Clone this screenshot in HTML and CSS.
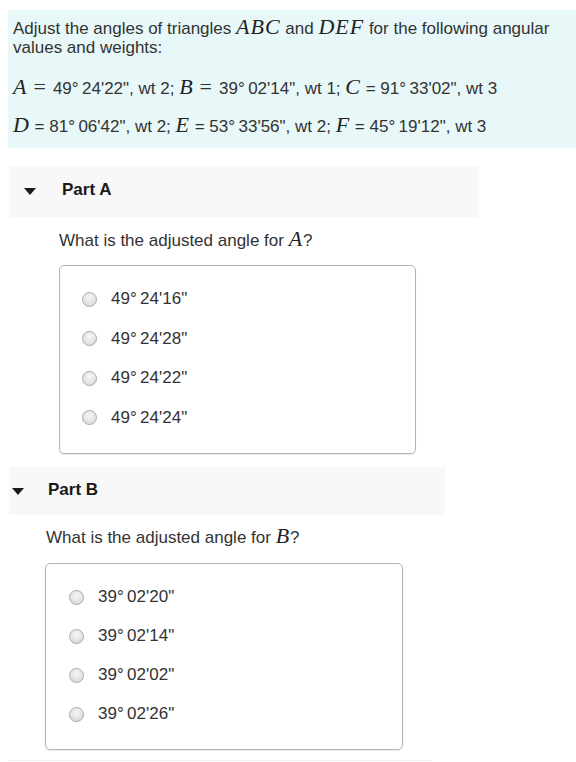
FILE: index.html
```html
<!DOCTYPE html>
<html lang="en">
<head>
    <meta charset="UTF-8">
    <meta name="viewport" content="width=device-width, initial-scale=1.0">
    <title>Angle Adjustment</title>
    <link rel="stylesheet" href="styles.css">
</head>
<body>
    <div class="prompt">
        <p>Adjust the angles of triangles <i class="m">ABC</i> and <i class="m">DEF</i> for the following angular values and weights:</p>
        <p class="vals"><i class="m">A</i><span class="meq">=</span>49°&thinsp;24'22", wt 2; <i class="m">B</i><span class="meq">=</span>39°&thinsp;02'14", wt 1; <i class="m">C</i> = 91°&thinsp;33'02", wt 3</p>
        <p class="vals"><i class="m">D</i> = 81°&thinsp;06'42", wt 2; <i class="m">E</i> = 53°&thinsp;33'56", wt 2; <i class="m">F</i> = 45°&thinsp;19'12", wt 3</p>
    </div>

    <div class="part part-a">
        <div class="part-head">
            <span class="caret"></span>
            <span class="part-title">Part A</span>
        </div>
        <div class="question">What is the adjusted angle for <i class="m">A</i>?</div>
        <div class="choices">
            <label class="choice"><input type="radio" name="a">49°&thinsp;24'16"</label>
            <label class="choice"><input type="radio" name="a">49°&thinsp;24'28"</label>
            <label class="choice"><input type="radio" name="a">49°&thinsp;24'22"</label>
            <label class="choice"><input type="radio" name="a">49°&thinsp;24'24"</label>
        </div>
    </div>

    <div class="part part-b">
        <div class="part-head">
            <span class="caret"></span>
            <span class="part-title">Part B</span>
        </div>
        <div class="question">What is the adjusted angle for <i class="m">B</i>?</div>
        <div class="choices">
            <label class="choice"><input type="radio" name="b">39°&thinsp;02'20"</label>
            <label class="choice"><input type="radio" name="b">39°&thinsp;02'14"</label>
            <label class="choice"><input type="radio" name="b">39°&thinsp;02'02"</label>
            <label class="choice"><input type="radio" name="b">39°&thinsp;02'26"</label>
        </div>
        <div class="rule"></div>
    </div>
</body>
</html>
```

FILE: styles.css
```css
* {
    margin: 0;
    padding: 0;
    box-sizing: border-box;
}

body {
    font-family: "Liberation Sans", Arial, sans-serif;
    font-size: 17px;
    line-height: 20px;
    color: #333;
    background: #fff;
}

/* math letters, set like MathJax italics */
.m {
    font-family: "Liberation Serif", "Times New Roman", serif;
    font-style: italic;
    font-size: 22px;
    line-height: 0;
    letter-spacing: 1px;
    color: #222;
}

.meq {
    font-family: "Liberation Serif", serif;
    font-size: 22px;
    line-height: 0;
    margin: 0 7px 0 6px;
}

/* problem statement */
.prompt {
    margin: 10px 0 0 8px;
    background: #e8f7f8;
    padding: 9px 12px 12px 5px;
    line-height: 19px;
    height: 138px;
}

.prompt .vals {
    margin-top: 22px;
}

.prompt .vals + .vals {
    margin-top: 19px;
}

/* parts */
.part-head {
    display: flex;
    align-items: center;
    background: #f8f8f8;
    margin-left: 9px;
}

.caret {
    width: 0;
    height: 0;
    border-left: 6px solid transparent;
    border-right: 6px solid transparent;
    border-top: 7px solid #1a1a1a;
}

.part-title {
    font-weight: bold;
    color: #1a1a1a;
    padding-bottom: 3px;
}

.choices {
    display: flex;
    flex-direction: column;
    border: 1px solid #b4b4b4;
    border-radius: 5px;
    box-shadow: 0 1px 1px rgba(0, 0, 0, 0.08);
}

.choice {
    display: flex;
    align-items: center;
    height: 20px;
}

.choice input {
    appearance: none;
    -webkit-appearance: none;
    width: 15px;
    height: 15px;
    border-radius: 50%;
    border: 1px solid #a9a9a9;
    background: radial-gradient(circle at 50% 35%, #f6f6f6 0%, #e2e2e2 60%, #d0d0d0 100%);
    margin-right: 14px;
}

/* part A */
.part-a .part-head {
    margin-top: 18px;
    width: 470px;
    height: 51px;
    padding-left: 15px;
}

.part-a .caret {
    margin-right: 26px;
}

.part-a .question {
    margin: 14px 0 0 59px;
}

.part-a .choices {
    margin: 14px 0 0 59px;
    width: 357px;
    height: 189px;
    padding: 23px 0 0 22px;
    gap: 19.67px;
}

/* part B */
.part-b .part-head {
    margin-top: 13px;
    width: 436px;
    height: 48px;
    padding-left: 3px;
}

.part-b .caret {
    margin-right: 24px;
}

.part-b .question {
    margin: 13px 0 0 46px;
}

.part-b .choices {
    margin: 15px 0 0 45px;
    width: 358px;
    height: 187px;
    padding: 23px 0 0 23px;
    gap: 19px;
}

.rule {
    margin: 10px 0 0 8px;
    width: 424px;
    border-top: 1px solid #eeeeee;
}
```
